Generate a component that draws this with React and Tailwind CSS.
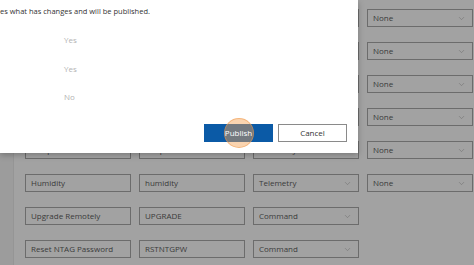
import React from 'react'
import { ChevronDown } from 'lucide-react'

// rows 1-4 sit fully under the dialog, so only their last column shows
const rows = [
  [null, null, null, 'None'],
  [null, null, null, 'None'],
  [null, null, null, 'None'],
  [null, null, null, 'None'],
  ['Temperature', 'temperature', 'Telemetry', 'None'],
  ['Humidity', 'humidity', 'Telemetry', 'None'],
  ['Upgrade Remotely', 'UPGRADE', 'Command', null],
  ['Reset NTAG Password', 'RSTNTGPW', 'Command', null],
]

const Field = ({ children }) => (
  <div className="h-[18px] border border-[#6c6c6c] bg-[#a2a2a2] px-[5px] flex items-center text-[8px] text-[#3a3a3a] truncate">
    {children}
  </div>
)

const Select = ({ children }) => (
  <div className="h-[18px] border border-[#6c6c6c] bg-[#a2a2a2] pl-[5px] pr-[6px] flex items-center justify-between text-[8px] text-[#3a3a3a]">
    <span>{children}</span>
    <ChevronDown size={9} strokeWidth={1.5} className="text-[#707070]" />
  </div>
)

const App = () => {
  return (
    <div className="relative w-[474px] h-[265px] overflow-hidden bg-[#a2a2a2]" style={{ fontFamily: '"Open Sans", "Noto Sans", sans-serif' }}>
      {/* page behind the overlay */}
      <div className="flex h-full">
        <div className="w-[14px] shrink-0 bg-[#9c9c9c] border-r border-[#959595]" />
        <div className="pl-[11px] pt-[9px] grid grid-cols-[106px_106px_106px_106px] gap-x-[8px] gap-y-[15px] content-start">
          {rows.map((r, i) => (
            <React.Fragment key={i}>
              <Field>{r[0]}</Field>
              <Field>{r[1]}</Field>
              <Select>{r[2]}</Select>
              {r[3] ? <Select>{r[3]}</Select> : <div />}
            </React.Fragment>
          ))}
        </div>
      </div>

      {/* publish dialog */}
      <div className="absolute left-0 top-0 w-[358px] h-[153px] bg-white shadow-[0_2px_6px_rgba(0,0,0,0.25)] flex flex-col">
        <p className="mt-[6px] text-[7.5px] leading-[11px] text-[#333]">es what has changes and will be published.</p>
        <div className="mt-[17px] pl-[64px] flex flex-col gap-y-[17.5px] text-[8px] leading-[11px] text-[#b3b3b3]">
          <span>Yes</span>
          <span>Yes</span>
          <span>No</span>
        </div>
        <div className="mt-auto mb-[11px] flex justify-end gap-[5px] pr-[11px]">
          <button className="relative w-[69px] h-[18px] bg-[#0b5aa6] text-white text-[8px]">
            <span className="absolute left-1/2 top-1/2 -translate-x-1/2 -translate-y-1/2 w-[30px] h-[30px] rounded-full bg-[rgba(245,160,80,0.45)] border border-[rgba(240,150,70,0.5)]" />
            <span className="relative">Publish</span>
          </button>
          <button className="w-[69px] h-[18px] bg-white border border-[#8a8a8a] text-[#333] text-[8px]">Cancel</button>
        </div>
      </div>
    </div>
  )
}

export default App
